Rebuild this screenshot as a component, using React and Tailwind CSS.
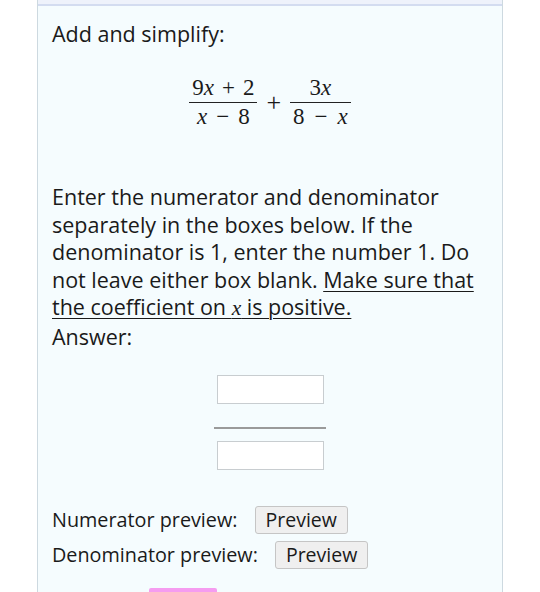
export default function App() {
  return (
    <div className="min-h-[592px] bg-white" style={{ fontFamily: '"Open Sans", "Noto Sans", sans-serif' }}>
      <div className="mx-[37px] h-[592px] overflow-hidden border-x border-[#cdd9e0] bg-[#f5fcfe]">
        <div className="h-[6px] border-b-2 border-[#d3dcf0] bg-[#eef2fb]" />
        <div className="px-[14px] pt-[14px] text-[21.5px] leading-[27.5px] text-[#1a1a1a]">
          <p>Add and simplify:</p>

          {/* math */}
          <div className="mt-[26px] flex items-center justify-center gap-[9px] text-[23px]" style={{ fontFamily: '"Liberation Serif", "DejaVu Serif", serif' }}>
            <Frac num={<><span>9</span><i>x</i><span className="mx-[8px]">+</span><span>2</span></>} den={<><i>x</i><span className="mx-[9px]">−</span><span>8</span></>} />
            <span className="text-[26px]">+</span>
            <Frac num={<><span>3</span><i>x</i></>} den={<><span>8</span><span className="mx-[10px]">−</span><i>x</i></>} />
          </div>

          <p className="mt-[52px]">
            Enter the numerator and denominator separately in the boxes below. If the denominator is 1, enter the number 1. Do not leave either box blank.{" "}
            <span className="underline decoration-1 underline-offset-[3px]">
              Make sure that the coefficient on <i style={{ fontFamily: '"Liberation Serif", serif' }}>x</i> is positive.
            </span>
          </p>
          <p>Answer:</p>

          <div className="mt-[25px] flex flex-col items-center">
            <input className="h-[29px] w-[107px] border border-[#c8cdd0] bg-white" />
            <div className="mt-[23px] h-[2px] w-[112px] bg-[#9a9a9a]" />
            <input className="mt-[12px] h-[29px] w-[107px] border border-[#c8cdd0] bg-white" />
          </div>

          <div className="text-[19.8px]">
            <div className="mt-[36px] flex items-center gap-[17px]">
              <span>Numerator preview:</span>
              <button className="h-[28px] rounded-[3px] border border-[#c5c5c5] bg-[#efefef] px-[10px] text-[19.5px] leading-[24px]">Preview</button>
            </div>
            <div className="mt-[7px] flex items-center gap-[17px]">
              <span>Denominator preview:</span>
              <button className="h-[28px] rounded-[3px] border border-[#c5c5c5] bg-[#efefef] px-[10px] text-[19.5px] leading-[24px]">Preview</button>
            </div>
          </div>
          <div className="ml-[97px] mt-[19px] h-[8px] w-[68px] rounded-t-[2px] bg-[#f59cf0]" />
        </div>
      </div>
    </div>
  );
}

function Frac({ num, den }) {
  return (
    <div className="flex flex-col items-center">
      <div className="px-[3px] leading-[28px]">{num}</div>
      <div className="h-[1.5px] w-full bg-[#222]" />
      <div className="px-[3px] leading-[28px]">{den}</div>
    </div>
  );
}
